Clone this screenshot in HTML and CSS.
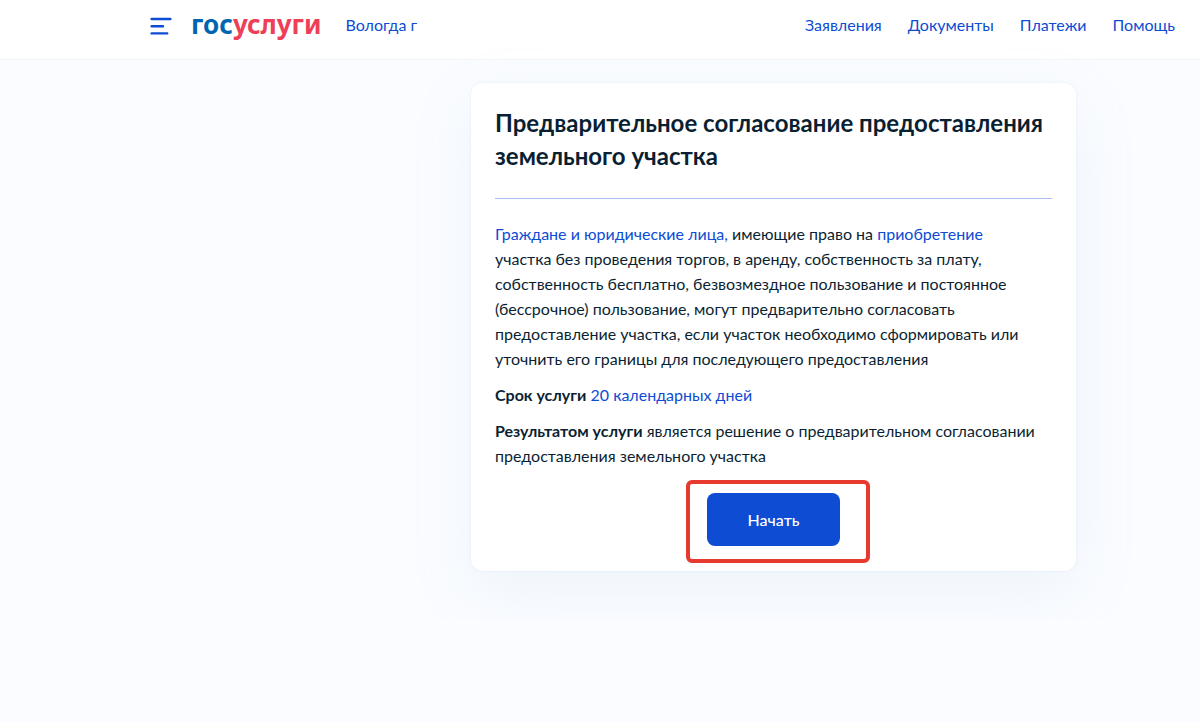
FILE: index.html
```html
<!DOCTYPE html>
<html lang="ru">
<head>
  <meta charset="utf-8">
  <meta name="viewport" content="width=device-width, initial-scale=1">
  <title>Предварительное согласование предоставления земельного участка</title>
  <link rel="stylesheet" href="styles.css">
</head>
<body>
  <header class="header">
    <button class="menu-button" type="button" aria-label="Меню">
      <svg width="22" height="20" viewBox="0 0 22 20" fill="none" stroke="#0d4cd3" stroke-width="2.4" stroke-linecap="round">
        <path d="M1.6 4H20.4M1.6 11.2H13M1.6 18.4H17.2"/>
      </svg>
    </button>
    <a class="logo" href="#"><span class="logo-blue">гос</span><span class="logo-red">услуги</span></a>
    <a class="city" href="#">Вологда г</a>
    <nav class="nav">
      <a href="#">Заявления</a>
      <a href="#">Документы</a>
      <a href="#">Платежи</a>
      <a href="#">Помощь</a>
    </nav>
  </header>

  <main class="main">
    <section class="card">
      <h1>Предварительное согласование предоставления земельного участка</h1>
      <hr>
      <p>
        <a href="#">Граждане и юридические лица,</a> имеющие право на <a href="#">приобретение</a><br>
        участка без проведения торгов, в аренду, собственность за плату,<br>
        собственность бесплатно, безвозмездное пользование и постоянное<br>
        (бессрочное) пользование, могут предварительно согласовать<br>
        предоставление участка, если участок необходимо сформировать или<br>
        уточнить его границы для последующего предоставления
      </p>
      <p><b>Срок услуги</b> <a href="#">20 календарных дней</a></p>
      <p><b>Результатом услуги</b> является решение о предварительном согласовании предоставления земельного участка</p>
      <div class="actions">
        <div class="start">
          <button class="start-button" type="button">Начать</button>
          <span class="start-frame"></span>
        </div>
      </div>
    </section>
  </main>
</body>
</html>
```

FILE: styles.css
```css
* {
  box-sizing: border-box;
}

body {
  margin: 0;
  font-family: Lato, "Open Sans", sans-serif;
  font-size: 16px;
  line-height: 25px;
  color: #0b1f33;
  background-color: #fafcff;
}

a {
  color: #0d4cd3;
  text-decoration: none;
}

.header {
  display: flex;
  align-items: center;
  padding: 5px 25px 15px 150px;
  background-color: #fff;
  border-bottom: 1px solid #f2f5fb;
}

.menu-button {
  display: flex;
  margin-right: 19px;
  padding: 0;
  border: none;
  background: none;
  cursor: pointer;
}

.logo {
  margin-right: 24px;
  font-family: "Noto Sans", sans-serif;
  font-size: 26px;
  font-weight: bold;
  line-height: 39px;
}

.logo-blue {
  color: #0065b1;
}

.logo-red {
  color: #ee3f58;
}

.nav {
  display: flex;
  gap: 26px;
  margin-left: auto;
}

.main {
  padding: 23px 124px 48px 24px;
}

.card {
  max-width: 605px;
  margin-left: auto;
  padding: 23px 24px 25px;
  background-color: #fff;
  border-radius: 12px;
  box-shadow: 0 0 3px rgba(13, 76, 211, 0.08), 0 20px 64px rgba(155, 187, 220, 0.12);
}

h1 {
  margin: 0;
  font-size: 24px;
  font-weight: bold;
  line-height: 33px;
}

hr {
  height: 1px;
  margin: 26px 0 22px;
  border: none;
  background-color: #a9bdf0;
}

p {
  margin: 0 0 11px;
}

.actions {
  display: flex;
  justify-content: center;
  margin-top: 25px;
}

.start {
  position: relative;
}

.start-button {
  padding: 14px 41px;
  border: none;
  border-radius: 8px;
  background-color: #0d4cd3;
  color: #fff;
  font: inherit;
  font-weight: 500;
  cursor: pointer;
}

.start-button:hover {
  background-color: #1d5deb;
}

.start-frame {
  position: absolute;
  inset: -13px -30px -17px -21px;
  border: 4px solid #e63a2e;
  border-radius: 6px;
  pointer-events: none;
}
```
